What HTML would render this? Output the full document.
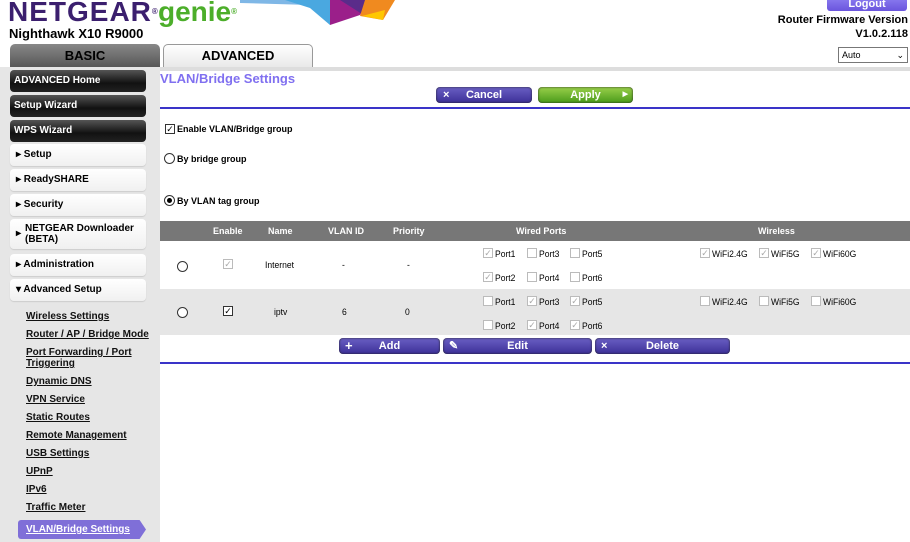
<!DOCTYPE html>
<html><head><meta charset="utf-8"><style>
*{margin:0;padding:0;box-sizing:border-box}
body{width:910px;height:542px;overflow:hidden;background:#fff;font-family:"Liberation Sans",Arial,sans-serif;position:relative;font-weight:bold;font-size:10px;color:#000}
.a{position:absolute}
.blk{position:absolute;left:10px;width:136px;height:22px;background:linear-gradient(#555,#111 60%,#222);border-radius:4px;color:#fff;font-size:10px;line-height:22px;padding-left:4px}
.lt{position:absolute;left:10px;width:136px;height:22px;background:linear-gradient(#fff,#f0f0f0);border-radius:4px;box-shadow:0 1px 1px #ccc;font-size:10px;line-height:22px;padding-left:6px}
.lnk{position:absolute;left:26px;font-size:10px;text-decoration:underline;color:#111}
.btn{position:absolute;height:16px;border-radius:4px;color:#fff;font-size:11px;line-height:16px;text-align:center;background:linear-gradient(#6a5fc4,#3c2f97);box-shadow:inset 0 0 2px #222}
.cb{position:absolute;width:10px;height:10px;border:1px solid #bbb;background:#fff;font-size:9px;line-height:8px;text-align:center;color:#aaa;font-weight:normal}
.cb.k{border-color:#333;color:#000}
.t{position:absolute;font-size:9px;font-weight:normal;transform:scaleX(.95);transform-origin:left}
.rd{position:absolute;width:11px;height:11px;border:1px solid #333;border-radius:50%;background:#fff}
.th{position:absolute;top:226px;color:#fff;font-size:9px}
</style></head><body>
<div class="a" style="left:8px;top:-4px;font-size:28px;font-weight:900;color:#3b1f6e;letter-spacing:1px;line-height:32px">NETGEAR<span style="font-size:8px;vertical-align:top">®</span></div>
<div class="a" style="left:158px;top:-4px;font-size:28px;color:#4cae2a;line-height:32px">genie<span style="font-size:8px;vertical-align:top">®</span></div>
<svg class="a" style="left:240px;top:0" width="180" height="28"><polygon points="0,0 60,0 70,5 0,3" fill="#7fb7e6"/><polygon points="45,0 90,0 90,25 70,8" fill="#4aa8e0"/><polygon points="90,0 130,0 120,15 90,25" fill="#9b1f8a"/><polygon points="100,0 130,0 122,14" fill="#5a2c8a"/><polygon points="125,0 155,0 143,20 120,16" fill="#f08a1f"/><polygon points="122,16 145,10 143,20" fill="#ffc700"/></svg>
<div class="a" style="left:9px;top:26px;font-size:13px">Nighthawk X10 R9000</div>
<div class="a" style="left:827px;top:-2px;width:80px;height:13px;background:linear-gradient(#8a7bf0,#6a55dd);border-radius:0 0 3px 3px;color:#fff;font-size:11px;text-align:center;line-height:13px">Logout</div>
<div class="a" style="right:2px;top:13px;font-size:11px;text-align:right;line-height:14px">Router Firmware Version<br>V1.0.2.118</div>
<div class="a" style="left:838px;top:47px;width:70px;height:16px;border:1px solid #777;font-size:9px;font-weight:normal;line-height:14px;padding-left:3px">Auto<span style="position:absolute;right:3px">⌄</span></div>
<div class="a" style="left:10px;top:44px;width:150px;height:24px;background:linear-gradient(#888,#555);border-radius:5px 5px 0 0;text-align:center;font-size:13px;line-height:24px">BASIC</div>
<div class="a" style="left:163px;top:44px;width:150px;height:24px;background:linear-gradient(#fff,#e8e8e8);border:1px solid #999;border-bottom:none;border-radius:5px 5px 0 0;text-align:center;font-size:13px;line-height:22px">ADVANCED</div>
<div class="a" style="left:0;top:67px;width:910px;height:4px;background:#ddd"></div>
<div class="a" style="left:0;top:67px;width:160px;height:475px;background:#e6e6e6"></div>
<div class="blk" style="top:70px">ADVANCED Home</div>
<div class="blk" style="top:95px">Setup Wizard</div>
<div class="blk" style="top:120px">WPS Wizard</div>
<div class="lt" style="top:144px">▸ Setup</div>
<div class="lt" style="top:169px">▸ ReadySHARE</div>
<div class="lt" style="top:194px">▸ Security</div>
<div class="lt" style="top:219px;height:30px;line-height:11px;padding-top:4px;padding-left:15px">NETGEAR Downloader<br>(BETA)<span style="position:absolute;left:6px;top:9px">▸</span></div>
<div class="lt" style="top:254px">▸ Administration</div>
<div class="lt" style="top:279px">▾ Advanced Setup</div>
<div class="lnk" style="top:311px">Wireless Settings</div>
<div class="lnk" style="top:329px">Router / AP / Bridge Mode</div>
<div class="lnk" style="top:347px;line-height:11px">Port Forwarding / Port<br>Triggering</div>
<div class="lnk" style="top:376px">Dynamic DNS</div>
<div class="lnk" style="top:394px">VPN Service</div>
<div class="lnk" style="top:412px">Static Routes</div>
<div class="lnk" style="top:430px">Remote Management</div>
<div class="lnk" style="top:448px">USB Settings</div>
<div class="lnk" style="top:466px">UPnP</div>
<div class="lnk" style="top:484px">IPv6</div>
<div class="lnk" style="top:502px">Traffic Meter</div>
<div class="a" style="left:18px;top:520px;width:128px;height:19px;background:#7f6fd8;border-radius:3px;clip-path:polygon(0 0,95% 0,100% 50%,95% 100%,0 100%)"></div>
<div class="lnk" style="top:524px;color:#fff">VLAN/Bridge Settings</div>
<div class="a" style="left:160px;top:71px;font-size:13px;color:#8070f0">VLAN/Bridge Settings</div>
<div class="btn" style="left:436px;top:87px;width:96px">Cancel<span style="position:absolute;left:7px">×</span></div>
<div class="btn" style="left:538px;top:87px;width:95px;background:linear-gradient(#9ad04a,#4a9a1a)">Apply<span style="position:absolute;right:5px;font-size:7px">▶</span></div>
<div class="a" style="left:160px;top:107px;width:750px;height:2px;background:#3a34c8"></div>
<div class="cb k" style="left:165px;top:124px">✓</div><div class="a" style="left:177px;top:124px;font-size:9px">Enable VLAN/Bridge group</div>
<div class="rd" style="left:164px;top:153px"></div><div class="a" style="left:177px;top:154px;font-size:9px">By bridge group</div>
<div class="rd" style="left:164px;top:195px"><div style="margin:2px;width:5px;height:5px;border-radius:50%;background:#000"></div></div><div class="a" style="left:177px;top:196px;font-size:9px">By VLAN tag group</div>
<div class="a" style="left:160px;top:221px;width:750px;height:20px;background:#777"></div>
<div class="th" style="left:213px">Enable</div><div class="th" style="left:268px">Name</div><div class="th" style="left:328px">VLAN ID</div><div class="th" style="left:393px">Priority</div><div class="th" style="left:516px">Wired Ports</div><div class="th" style="left:758px">Wireless</div>
<div class="a" style="left:160px;top:289px;width:750px;height:46px;background:#e6e6e6"></div>
<div class="rd" style="left:177px;top:261px"></div><div class="rd" style="left:177px;top:307px"></div>
<div class="cb" style="left:223px;top:259px">✓</div><div class="cb k" style="left:223px;top:306px">✓</div>
<div class="t" style="left:265px;top:260px">Internet</div><div class="t" style="left:274px;top:307px">iptv</div>
<div class="t" style="left:342px;top:260px">-</div><div class="t" style="left:342px;top:307px">6</div>
<div class="t" style="left:407px;top:260px">-</div><div class="t" style="left:405px;top:307px">0</div>
<div class="cb" style="left:483px;top:248px">✓</div><div class="t" style="left:495px;top:249px">Port1</div>
<div class="cb" style="left:527px;top:248px"></div><div class="t" style="left:539px;top:249px">Port3</div>
<div class="cb" style="left:570px;top:248px"></div><div class="t" style="left:582px;top:249px">Port5</div>
<div class="cb" style="left:483px;top:272px">✓</div><div class="t" style="left:495px;top:273px">Port2</div>
<div class="cb" style="left:527px;top:272px"></div><div class="t" style="left:539px;top:273px">Port4</div>
<div class="cb" style="left:570px;top:272px"></div><div class="t" style="left:582px;top:273px">Port6</div>
<div class="cb" style="left:483px;top:296px"></div><div class="t" style="left:495px;top:297px">Port1</div>
<div class="cb" style="left:527px;top:296px">✓</div><div class="t" style="left:539px;top:297px">Port3</div>
<div class="cb" style="left:570px;top:296px">✓</div><div class="t" style="left:582px;top:297px">Port5</div>
<div class="cb" style="left:483px;top:320px"></div><div class="t" style="left:495px;top:321px">Port2</div>
<div class="cb" style="left:527px;top:320px">✓</div><div class="t" style="left:539px;top:321px">Port4</div>
<div class="cb" style="left:570px;top:320px">✓</div><div class="t" style="left:582px;top:321px">Port6</div>
<div class="cb" style="left:700px;top:248px">✓</div><div class="t" style="left:712px;top:249px">WiFi2.4G</div>
<div class="cb" style="left:759px;top:248px">✓</div><div class="t" style="left:771px;top:249px">WiFi5G</div>
<div class="cb" style="left:811px;top:248px">✓</div><div class="t" style="left:823px;top:249px">WiFi60G</div>
<div class="cb" style="left:700px;top:296px"></div><div class="t" style="left:712px;top:297px">WiFi2.4G</div>
<div class="cb" style="left:759px;top:296px"></div><div class="t" style="left:771px;top:297px">WiFi5G</div>
<div class="cb" style="left:811px;top:296px"></div><div class="t" style="left:823px;top:297px">WiFi60G</div>
<div class="btn" style="left:339px;top:338px;width:101px">Add<span style="position:absolute;left:6px;font-size:13px">+</span></div>
<div class="btn" style="left:443px;top:338px;width:149px">Edit<span style="position:absolute;left:6px">✎</span></div>
<div class="btn" style="left:595px;top:338px;width:135px">Delete<span style="position:absolute;left:6px">×</span></div>
<div class="a" style="left:160px;top:362px;width:750px;height:2px;background:#3a34c8"></div>
</body></html>
